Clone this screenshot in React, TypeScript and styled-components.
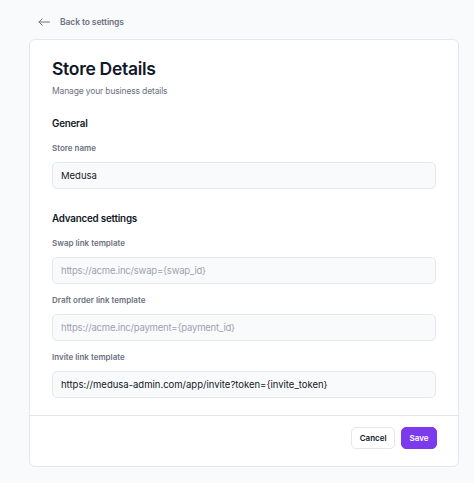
import { FunctionComponent } from "react";
import styled, { createGlobalStyle } from "styled-components";

const GlobalStyle = createGlobalStyle`
  html, body {
    margin: 0;
    padding: 0;
    background: #f9fafb;
  }
  body {
    font-family: Inter, "Noto Sans", sans-serif;
    color: #111827;
    -webkit-font-smoothing: antialiased;
  }
`;

const Page = styled.div`
  min-height: 483px;
  box-sizing: border-box;
  padding: 13px 0 17px 29px;
`;

const BackLink = styled.a`
  display: flex;
  align-items: center;
  gap: 10px;
  height: 18px;
  margin: 0 0 8px 9px;
  font-size: 8.5px;
  letter-spacing: -0.1px;
  font-weight: 600;
  color: #6b7280;
  text-decoration: none;
  cursor: pointer;
`;

const Card = styled.section`
  width: 430px;
  box-sizing: border-box;
  background: #ffffff;
  border: 1px solid #e5e7eb;
  border-radius: 6px;
`;

const Body = styled.div`
  display: flex;
  flex-direction: column;
  padding: 16px 22px 17px;
`;

const Title = styled.h1`
  margin: 0;
  font-size: 17.5px;
  line-height: 25px;
  letter-spacing: -0.3px;
  font-weight: 600;
  color: #111827;
`;

const Subtitle = styled.p`
  margin: 3px 0 0;
  font-size: 8.5px;
  line-height: 14px;
  letter-spacing: -0.15px;
  color: #6b7280;
`;

const SectionTitle = styled.h2<{ $gap: number }>`
  margin: ${(p) => p.$gap}px 0 0;
  font-size: 9.8px;
  line-height: 16px;
  letter-spacing: -0.2px;
  font-weight: 600;
  color: #111827;
`;

const Field = styled.label`
  display: flex;
  flex-direction: column;
  gap: 7px;
  margin-top: 10px;
`;

const Label = styled.span`
  font-size: 8px;
  line-height: 13px;
  font-weight: 600;
  color: #6b7280;
`;

const Input = styled.input`
  box-sizing: border-box;
  width: 100%;
  height: 27px;
  padding: 0 8px;
  background: #f9fafb;
  border: 1px solid #e5e7eb;
  border-radius: 5px;
  font-family: Inter, "Noto Sans", sans-serif;
  font-size: 9.5px;
  color: #111827;
  outline: none;

  &::placeholder {
    color: #9ca3af;
    letter-spacing: -0.2px;
  }
`;

const Footer = styled.footer`
  display: flex;
  justify-content: flex-end;
  gap: 6px;
  padding: 11px 21px 17px;
  border-top: 1px solid #e5e7eb;
`;

const Button = styled.button<{ $primary?: boolean }>`
  height: 22px;
  padding: 0 7.5px;
  border-radius: 5px;
  border: 1px solid ${(p) => (p.$primary ? "#7c3aed" : "#e5e7eb")};
  background: ${(p) => (p.$primary ? "#7c3aed" : "#ffffff")};
  color: ${(p) => (p.$primary ? "#ffffff" : "#111827")};
  font-family: Inter, "Noto Sans", sans-serif;
  font-size: 8px;
  font-weight: 600;
  cursor: pointer;
`;

const ArrowLeft: FunctionComponent = () => (
  <svg width="12" height="8" viewBox="0 0 12 8" fill="none">
    <path
      d="M11.5 4H1M4.2 0.8L1 4l3.2 3.2"
      stroke="#6b7280"
      strokeWidth="1"
      strokeLinecap="round"
      strokeLinejoin="round"
    />
  </svg>
);

const fields = [
  { label: "Swap link template", placeholder: "https://acme.inc/swap={swap_id}" },
  {
    label: "Draft order link template",
    placeholder: "https://acme.inc/payment={payment_id}",
  },
  {
    label: "Invite link template",
    value: "https://medusa-admin.com/app/invite?token={invite_token}",
  },
];

const App: FunctionComponent = () => {
  return (
    <>
      <GlobalStyle />
      <Page>
        <BackLink>
          <ArrowLeft />
          Back to settings
        </BackLink>
        <Card>
          <Body>
            <Title>Store Details</Title>
            <Subtitle>Manage your business details</Subtitle>

            <SectionTitle $gap={17.5}>General</SectionTitle>
            <Field>
              <Label>Store name</Label>
              <Input readOnly defaultValue="Medusa" />
            </Field>

            <SectionTitle $gap={22}>Advanced settings</SectionTitle>
            {fields.map((f) => (
              <Field key={f.label}>
                <Label>{f.label}</Label>
                <Input
                  readOnly
                  placeholder={f.placeholder}
                  defaultValue={f.value}
                />
              </Field>
            ))}
          </Body>
          <Footer>
            <Button>Cancel</Button>
            <Button $primary>Save</Button>
          </Footer>
        </Card>
      </Page>
    </>
  );
};

export default App;
